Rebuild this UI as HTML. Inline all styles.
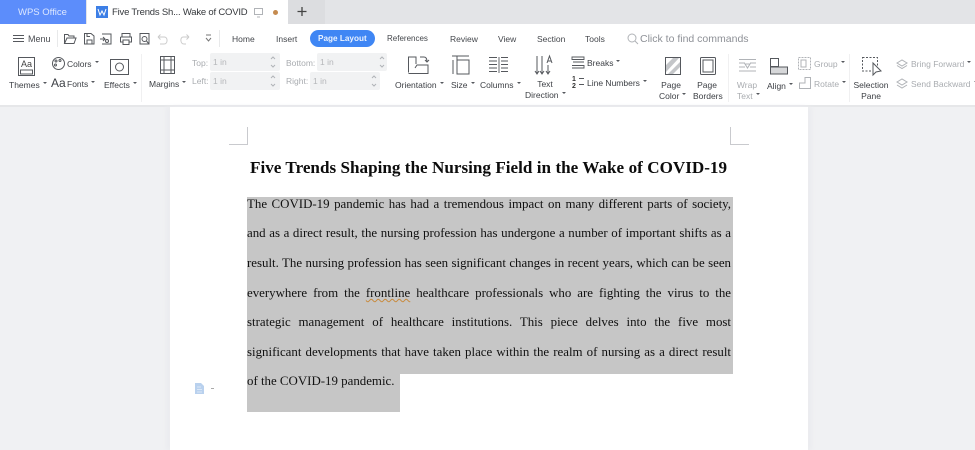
<!DOCTYPE html>
<html><head><meta charset="utf-8">
<style>
html,body{margin:0;padding:0}
body{width:975px;height:450px;position:relative;overflow:hidden;background:#f0f1f3;font-family:"Liberation Sans",sans-serif}
.a{position:absolute;white-space:nowrap}
.t{position:absolute;white-space:nowrap;font-size:8.5px;line-height:12px;color:#3c3f44}
.c{text-align:center;transform:translateX(-50%)}
.g{color:#a9acb0}
.tab{position:absolute;white-space:nowrap;font-size:8.5px;line-height:12px;top:33px;color:#44474c}
.l{position:absolute;left:247px;width:484px;font:12.9px/16px "Liberation Serif",serif;color:#111;text-align:justify;text-align-last:justify;white-space:nowrap}
.sp{position:absolute;width:70px;height:18px;background:#f1f2f3;border-radius:2px}
.sp span{position:absolute;left:3px;top:3px;font-size:8.5px;line-height:12px;color:#b5b7ba}
svg{position:absolute;overflow:visible}
svg *{fill:none;stroke:#55585d;stroke-width:1}
svg.g2 *{stroke:#b0b3b7}
.d:after{content:"";display:inline-block;border:2px solid transparent;border-top:2.5px solid #55585d;border-bottom:0;margin-left:3px;vertical-align:4px}
</style></head><body>
<div class="a" style="left:0;top:0;width:975px;height:24px;background:#e3e4e7"></div>
<div class="a" style="left:0;top:0;width:86px;height:24px;background:#5c8dfb"></div>
<div class="a" style="left:18px;top:6px;font-size:9.500px;line-height:13px;color:#dce7ff">WPS Office</div>
<div class="a" style="left:87px;top:0;width:201px;height:24px;background:#fff"></div>
<div class="a" style="left:288px;top:0;width:37px;height:24px;background:#dcdde0"></div>
<div class="a" style="left:96px;top:6px;width:12px;height:12px;background:#3d7fe6"></div>
<svg style="left:96px;top:6px" width="12" height="12"><path d="M2 3L4 9L6 5L8 9L10 3" style="stroke:#fff"/></svg>
<div class="a" style="left:112px;top:5px;font-size:9.500px;line-height:15px;color:#35383c;letter-spacing:-.2px">Five Trends Sh... Wake of COVID</div>
<svg class="g2" style="left:254px;top:8px" width="10" height="10"><rect x=".5" y=".5" width="8" height="6"/><path d="M3 9H6"/></svg>
<div class="a" style="left:273px;top:10px;width:5px;height:5px;border-radius:50%;background:#c58b4f"></div>
<svg style="left:297px;top:7px" width="10" height="10"><path d="M5 0V9M.5 4.500H9.500" style="stroke:#444;stroke-width:1.300"/></svg>

<div class="a" style="left:0;top:24px;width:975px;height:81px;background:#fff"></div>
<div class="a" style="left:0;top:105px;width:975px;height:2px;background:#e6e7e9"></div>

<svg style="left:13px;top:35px" width="11" height="8"><path d="M0 .5H11M0 3.500H11M0 6.500H11"/></svg>
<div class="a" style="left:28px;top:33px;font-size:9px;line-height:12px;color:#4a4d52">Menu</div>
<svg style="left:64px;top:33px" width="150" height="12">
<path d="M.5 10.500V1.500H4L5 3H10V5M.5 10.500H10L12 5H3Z"/>
<path d="M20.500 .5H27L30 3V11H20.500ZM23 11V7H28V11M23 1V3.500H26"/>
<path d="M38 1H47V11H38M36 6H41M39 4L41 6L39 8"/><circle cx="43" cy="8" r="1.500"/>
<path d="M58 4V.5H66V4M56.500 4H67.500V9H65M59 9H56.500V4M59 7H65V11.500H59Z"/>
<path d="M76 .5H85V11H76Z"/><circle cx="80.500" cy="6" r="2.500"/><path d="M82.500 8L85 11"/>
<g style="opacity:.5"><path d="M94 4H100.500C104 4 104 11 100 11H96M94 4L96.500 1.500M94 4L96.500 6.500" style="stroke:#999"/>
<path d="M125 4H119C116 4 116 11 120 11H122M125 4L122.500 1.500M125 4L122.500 6.500" style="stroke:#999"/></g>
<path d="M142 2H147M142 5L144.500 8L147 5" style="stroke:#777"/>
</svg>
<div class="a" style="left:57px;top:30px;width:1px;height:17px;background:#e8e9ea"></div>
<div class="a" style="left:219px;top:30px;width:1px;height:17px;background:#e8e9ea"></div>
<div class="tab" style="left:232px">Home</div>
<div class="tab" style="left:276px">Insert</div>
<div class="a" style="left:310px;top:30px;width:65px;height:17px;border-radius:9px;background:#3f86f4"></div>
<div class="a" style="left:318px;top:33px;font-size:8.200px;line-height:12px;font-weight:bold;color:#e8f1ff">Page Layout</div>
<div class="tab" style="left:387px;font-size:8px">References</div>
<div class="tab" style="left:450px">Review</div>
<div class="tab" style="left:498px">View</div>
<div class="tab" style="left:537px">Section</div>
<div class="tab" style="left:585px">Tools</div>
<svg class="g2" style="left:627px;top:33px" width="12" height="12"><circle cx="5" cy="5" r="4"/><path d="M8 8L11 11"/></svg>
<div class="a" style="left:640px;top:32px;font-size:10.500px;line-height:14px;color:#8d9096">Click to find commands</div>

<!-- theme group -->
<svg style="left:18px;top:57px" width="18" height="20"><rect x=".5" y=".5" width="16" height="18"/><rect x="2.500" y="13" width="12" height="4"/></svg>
<div class="a" style="left:21px;top:59px;font-size:9px;line-height:10px;color:#444">Aa</div>
<div class="t d" style="left:9px;top:79px">Themes</div>
<svg style="left:52px;top:57px" width="13" height="13"><circle cx="6.500" cy="6.500" r="6"/><circle cx="4" cy="4" r="1"/><circle cx="8" cy="3.500" r="1"/><circle cx="3.500" cy="8" r="1"/></svg>
<div class="t d" style="left:67px;top:58px">Colors</div>
<div class="a" style="left:51px;top:76px;font-size:12px;line-height:14px;color:#3c3f44">Aa</div>
<div class="t d" style="left:67px;top:78px">Fonts</div>
<svg style="left:110px;top:59px" width="19" height="16"><rect x=".5" y=".5" width="18" height="15"/><circle cx="9.500" cy="8" r="4"/></svg>
<div class="t d" style="left:104px;top:79px">Effects</div>
<div class="a" style="left:141px;top:54px;width:1px;height:48px;background:#f0f0f1"></div>
<svg style="left:160px;top:56px" width="16" height="19"><rect x=".5" y=".5" width="14" height="17"/><path d="M.5 4H14.500M.5 14H14.500M4 .5V17.500M11 .5V17.500"/></svg>
<div class="t d" style="left:149px;top:78px">Margins</div>
<div class="t g" style="left:192px;top:57px">Top:</div>
<div class="t g" style="left:192px;top:75px">Left:</div>
<div class="sp" style="left:210px;top:53px"><span>1 in</span></div>
<div class="sp" style="left:210px;top:72px"><span>1 in</span></div>
<div class="t g" style="left:286px;top:57px">Bottom:</div>
<div class="t g" style="left:286px;top:75px">Right:</div>
<div class="sp" style="left:317px;top:53px"><span>1 in</span></div>
<div class="sp" style="left:310px;top:72px"><span>1 in</span></div>
<svg class="g2" style="left:270px;top:56px" width="118" height="32"><path d="M1 3L3 1L5 3M1 9L3 11L5 9M1 22L3 20L5 22M1 28L3 30L5 28M110 3L112 1L114 3M110 9L112 11L114 9M102 22L104 20L106 22M102 28L104 30L106 28"/></svg>

<svg style="left:408px;top:55px" width="22" height="20"><path d="M.5 17.500V2H8V9M.5 18.500H20V10H9L7 13"/><path d="M12 2H16C18 2 19 4 19 7M17 5L19 7L21 5"/></svg>
<div class="t d" style="left:395px;top:79px">Orientation</div>
<svg style="left:452px;top:55px" width="18" height="20"><path d="M0 1H17M1 5V19M5 .5V19H17V5H5"/></svg>
<div class="t d" style="left:451px;top:79px">Size</div>
<svg style="left:489px;top:57px" width="20" height="17"><path d="M0 .5H8M0 4H8M0 7.500H8M0 11H8M0 14.500H8M12 .5H19M12 4H19M12 7.500H19M12 11H19M12 14.500H19M10 0V16" style="stroke-width:.9"/></svg>
<div class="t d" style="left:480px;top:79px">Columns</div>
<svg style="left:536px;top:55px" width="18" height="20"><path d="M1 1V18M-1 16L1 19L3 16M6 1V18M4 16L6 19L8 16M12 10V18M10 16L12 19L14 16M11 8L13.500 1L16 8M12 6H15"/></svg>
<div class="t c" style="left:545px;top:78px">Text</div>
<div class="t d" style="left:525px;top:89px">Direction</div>
<svg style="left:572px;top:56px" width="13" height="13"><path d="M0 1H12V3.500H0ZM1 6H12M0 9.500H12V12H0" style="stroke-width:.9"/></svg>
<div class="t d" style="left:587px;top:57px">Breaks</div>
<div class="a" style="left:572px;top:76px;font-size:7px;line-height:7px;color:#333;font-weight:bold">1<br>2</div>
<svg style="left:578px;top:78px" width="7" height="8"><path d="M1 .5H6M1 6.500H6"/></svg>
<div class="t d" style="left:587px;top:77px">Line Numbers</div>

<svg style="left:665px;top:57px" width="16" height="18"><path d="M.5.500H15.500V17.500H.5Z"/><path d="M1 8L8 1H14L1 15ZM3 17L15 5V10L8 17Z" style="fill:#c4c6c9;stroke:none"/></svg>
<div class="t c" style="left:671px;top:79px">Page</div>
<div class="t d" style="left:659px;top:90px">Color</div>
<svg style="left:700px;top:57px" width="16" height="18"><rect x=".5" y=".5" width="15" height="17" rx="1"/><rect x="3" y="3" width="10" height="12"/></svg>
<div class="t c" style="left:707px;top:79px">Page</div>
<div class="t" style="left:693px;top:90px">Borders</div>
<div class="a" style="left:728px;top:54px;width:1px;height:48px;background:#f0f0f1"></div>
<svg class="g2" style="left:739px;top:59px" width="18" height="15"><path d="M0 .5H17M0 4H6M11 4H17M0 8H6M11 8H17M0 12H17M6 5L8.500 9L11 5Z"/></svg>
<div class="t g c" style="left:747px;top:79px">Wrap</div>
<div class="t g d" style="left:737px;top:90px">Text</div>
<svg style="left:770px;top:58px" width="19" height="17"><rect x=".5" y=".5" width="8" height="8"/><rect x=".5" y="9" width="17" height="7" style="fill:#d6d7d9"/></svg>
<div class="t d" style="left:767px;top:80px">Align</div>
<svg class="g2" style="left:798px;top:57px" width="13" height="13"><path d="M.5.500H12.500V12.500H.5Z" style="stroke-dasharray:2 1"/><rect x="3" y="3" width="5" height="7"/></svg>
<div class="t g d" style="left:814px;top:58px">Group</div>
<svg class="g2" style="left:799px;top:77px" width="12" height="12"><path d="M6 .5H11.500V11.500H.5V6H6Z"/></svg>
<div class="t g d" style="left:814px;top:78px">Rotate</div>
<div class="a" style="left:849px;top:54px;width:1px;height:48px;background:#f0f0f1"></div>
<svg style="left:862px;top:57px" width="20" height="19"><path d="M.5.500H15.500V14H.5Z" style="stroke-dasharray:2 1.500"/><path d="M11 6L11 18L14 15L19 14Z" style="fill:#fff"/></svg>
<div class="t c" style="left:871px;top:79px">Selection</div>
<div class="t c" style="left:871px;top:90px">Pane</div>
<svg class="g2" style="left:896px;top:58px" width="13" height="12"><path d="M1 5L6 2L11 5L6 8ZM1 7.500L6 10.500L11 7.500"/></svg>
<div class="t g d" style="left:911px;top:58px">Bring Forward</div>
<svg class="g2" style="left:896px;top:78px" width="13" height="12"><path d="M1 4L6 1L11 4L6 7ZM1 7L6 10L11 7"/></svg>
<div class="t g d" style="left:911px;top:78px">Send Backward</div>

<!-- page -->
<div class="a" style="left:170px;top:107px;width:638px;height:343px;background:#fff;box-shadow:-4px 0 4px #ebecef,4px 0 4px #ebecef"></div>
<div class="a" style="left:229px;top:127px;width:18px;height:17px;border-right:1px solid #c9cace;border-bottom:1px solid #c9cace"></div>
<div class="a" style="left:730px;top:127px;width:18px;height:17px;border-left:1px solid #c9cace;border-bottom:1px solid #c9cace"></div>
<div class="a" style="left:250px;top:157px;width:477px;font:bold 17.100px/21px 'Liberation Serif',serif;color:#0c0c0c;text-align:justify;text-align-last:justify">Five Trends Shaping the Nursing Field in the Wake of COVID-19</div>

<div class="a" style="left:247px;top:197px;width:486px;height:177px;background:#c6c6c6"></div>
<div class="a" style="left:247px;top:374px;width:153px;height:38px;background:#c6c6c6"></div>
<div class="l" style="top:196px">The COVID-19 pandemic has had a tremendous impact on many different parts of society,</div>
<div class="l" style="top:225px">and as a direct result, the nursing profession has undergone a number of important shifts as a</div>
<div class="l" style="top:255px">result. The nursing profession has seen significant changes in recent years, which can be seen</div>
<div class="l" style="top:285px">everywhere from the <span style="text-decoration:underline wavy #c98a3c 1px;text-underline-offset:1px">frontline</span> healthcare professionals who are fighting the virus to the</div>
<div class="l" style="top:314px">strategic management of healthcare institutions. This piece delves into the five most</div>
<div class="l" style="top:344px">significant developments that have taken place within the realm of nursing as a direct result</div>
<div class="l" style="top:373px;text-align-last:left">of the COVID-19 pandemic.</div>

<svg style="left:195px;top:383px" width="10" height="12"><path d="M0 0H6L9 3V11H0Z" style="fill:#b9d1ee;stroke:none"/><path d="M2 4H6M2 6.500H7M2 9H7" style="stroke:#e8f0fa;stroke-width:.8"/></svg>
<div class="a" style="left:211px;top:388px;width:3px;height:1px;background:#aaa"></div>
</body></html>
